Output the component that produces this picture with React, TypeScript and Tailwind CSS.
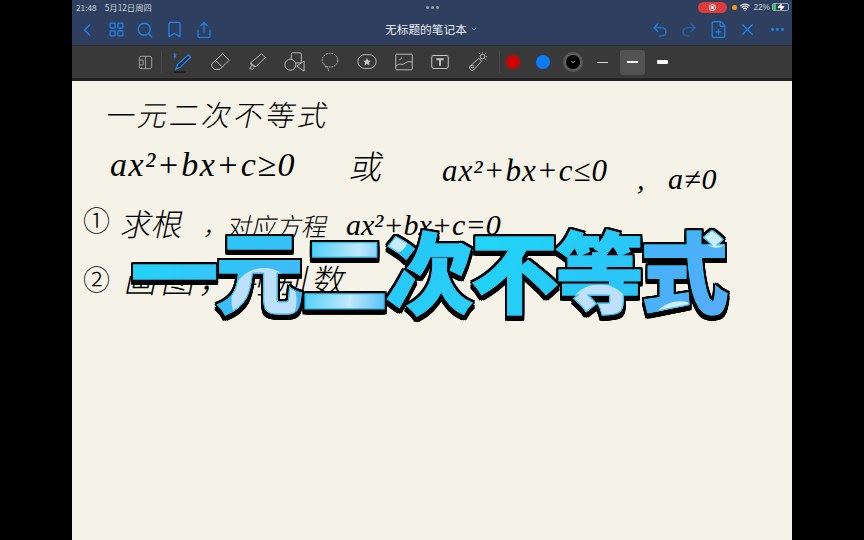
import { ChevronLeft, LayoutGrid, Search, Bookmark, Share, Undo2, Redo2, FilePlus, X, Ellipsis, ChevronDown, Wifi, Zap } from 'lucide-react';

const cjk = "font-['Noto_Sans_CJK_SC',sans-serif]";
const hand = "absolute whitespace-nowrap text-black font-light font-['Noto_Sans_CJK_SC',sans-serif] -skew-x-12";
const math = "absolute whitespace-nowrap text-black italic font-['Liberation_Serif',serif]";
const circled = "absolute whitespace-nowrap text-black font-light font-['Noto_Sans_CJK_SC',sans-serif]";

const toolIcon = 'w-[22px] h-[22px] text-[#c4c4c4]';

function Tool({ children }: { children: React.ReactNode }) {
  return <div className="w-[36.7px] flex justify-center">{children}</div>;
}

function NavSlot({ children }: { children: React.ReactNode }) {
  return <div className="w-[29.4px] flex justify-center">{children}</div>;
}

function BigChar({ ch, bg }: { ch: string; bg: string }) {
  return <span className={`inline-block w-[91px] -mx-[3px] text-center bg-clip-text text-transparent [-webkit-text-stroke:1px_#2ac4f6] ${bg}`}>{ch}</span>;
}

export default function App() {
  return (
    <div className="w-[864px] h-[540px] bg-black flex justify-center overflow-hidden">
      <div className={`w-[720px] h-full flex flex-col ${cjk}`}>
        {/* status bar */}
        <div className="h-[14px] bg-[#2e3f5f] flex items-center justify-between pl-[4px] pr-[3px] text-[8.3px] text-[#c9d0dc] relative">
          <div className="flex gap-[8px]">
            <span>21:48</span>
            <span>5月12日周四</span>
          </div>
          <div className="absolute left-[354px] top-[6px] flex gap-[2px]">
            <div className="w-[3px] h-[3px] rounded-full bg-[#9aa5b8]" />
            <div className="w-[3px] h-[3px] rounded-full bg-[#9aa5b8]" />
            <div className="w-[3px] h-[3px] rounded-full bg-[#9aa5b8]" />
          </div>
          <div className="flex items-center">
            <div className="w-[29px] h-[11px] rounded-full bg-[#de3b3b] flex items-center justify-center">
              <div className="w-[7px] h-[7px] rounded-full border border-white flex items-center justify-center">
                <div className="w-[3px] h-[3px] rounded-full bg-white" />
              </div>
            </div>
            <div className="w-[5px] h-[5px] rounded-full bg-[#f59e0b] ml-[5px]" />
            <Wifi className="w-[10px] h-[10px] text-white ml-[3px]" strokeWidth={3} />
            <span className="ml-[3px] font-['Liberation_Sans',sans-serif]">22%</span>
            <div className="ml-[2px] w-[17px] h-[8px] rounded-[2px] border border-[#9aa5b8] relative overflow-hidden">
              <div className="w-[3px] h-full bg-[#34c759]" />
              <Zap className="absolute left-[4px] top-[-1px] w-[8px] h-[8px] text-white fill-white" />
            </div>
          </div>
        </div>

        {/* nav bar */}
        <div className="h-[31px] bg-[#2e3f5f] flex items-center justify-between text-[#1f85f0] relative">
          <div className="flex items-center">
            <NavSlot><ChevronLeft className="w-[20px] h-[20px]" strokeWidth={1.7} /></NavSlot>
            <NavSlot><LayoutGrid className="w-[17px] h-[17px]" strokeWidth={1.7} /></NavSlot>
            <NavSlot><Search className="w-[18px] h-[18px]" strokeWidth={1.7} /></NavSlot>
            <NavSlot><Bookmark className="w-[19px] h-[19px]" strokeWidth={1.6} /></NavSlot>
            <NavSlot><Share className="w-[18px] h-[18px]" strokeWidth={1.6} /></NavSlot>
          </div>
          <div className="absolute left-[313px] top-[7px] flex items-center text-[11.7px] leading-[16px] text-[#e8ebf0]">
            无标题的笔记本
            <ChevronDown className="w-[8px] h-[8px] ml-[3px] text-[#c9d0dc]" />
          </div>
          <div className="flex items-center">
            <NavSlot><Undo2 className="w-[18px] h-[18px]" strokeWidth={1.6} /></NavSlot>
            <NavSlot><Redo2 className="w-[18px] h-[18px] text-[#2468b8]" strokeWidth={1.6} /></NavSlot>
            <NavSlot><FilePlus className="w-[19px] h-[19px]" strokeWidth={1.5} /></NavSlot>
            <NavSlot><X className="w-[19px] h-[19px]" strokeWidth={1.5} /></NavSlot>
            <NavSlot><Ellipsis className="w-[17px] h-[17px]" strokeWidth={2.2} /></NavSlot>
          </div>
        </div>

        {/* toolbar */}
        <div className="h-[36px] bg-[#393939] border-t border-[#303030] border-b-[3px] border-b-[#232323] flex items-center pl-[57px]">
          <div className="w-[32px] flex justify-center">
            <svg viewBox="0 0 22 22" fill="none" stroke="currentColor" strokeWidth="1" className="w-[17px] h-[17px] text-[#b5b5b5]">
              <rect x="3" y="3" width="16" height="16" rx="2" />
              <path d="M11 3v16M3 8h5v6H3M6 19v-2" />
            </svg>
          </div>
          <div className="w-px h-[22px] bg-[#4a4a4a]" />
          <div className="w-[40px] flex justify-center relative">
            <svg viewBox="0 0 24 24" fill="none" className="w-[23px] h-[23px]">
              <path d="M5 19 7 14 18 4l2.5 2.5L9.5 17z" fill="#0f2b4d" stroke="#2b8cf0" strokeWidth="1.2" />
              <path d="M3 22h12" stroke="#111" strokeWidth="1.2" />
              <path d="M4 2v6M2.5 3.5l3 3M2.5 6.5l3-3" stroke="#2b8cf0" strokeWidth="1" />
            </svg>
          </div>
          <Tool>
            <svg viewBox="0 0 24 24" fill="none" stroke="currentColor" strokeWidth="1" className={toolIcon}>
              <path d="M15 3 22 10 12 20H6l-3-3v-3z" />
              <path d="M7 10l7 7" />
            </svg>
          </Tool>
          <Tool>
            <svg viewBox="0 0 24 24" fill="none" stroke="currentColor" strokeWidth="1" className={toolIcon}>
              <path d="M17 3l4 4-10 10-5-1-1-3z" />
              <path d="M5 13l5 4M6 16l-2 3 3 1 2-2" />
            </svg>
          </Tool>
          <Tool>
            <svg viewBox="0 0 24 24" fill="none" stroke="currentColor" strokeWidth="1" className={toolIcon}>
              <rect x="9" y="2" width="11" height="11" rx="1.5" />
              <circle cx="8" cy="15" r="6" className="fill-[#393939]" />
              <path d="M23 11v11l-8-5.5z" className="fill-[#393939]" />
            </svg>
          </Tool>
          <Tool>
            <svg viewBox="0 0 24 24" fill="none" stroke="currentColor" strokeWidth="1" strokeDasharray="2 1" className={toolIcon}>
              <ellipse cx="12" cy="10" rx="8.5" ry="7.5" />
              <path d="M7 16c0 3 2 2 3 3s0 3 1 3" />
            </svg>
          </Tool>
          <Tool>
            <svg viewBox="0 0 24 24" fill="none" stroke="currentColor" strokeWidth="1" className={toolIcon}>
              <rect x="2" y="4" width="20" height="15" rx="7.5" />
              <path d="m12 7.5 1.3 2.8 3 .3-2.2 2 .6 3-2.7-1.5-2.7 1.5.6-3-2.2-2 3-.3z" fill="currentColor" stroke="none" />
            </svg>
          </Tool>
          <Tool>
            <svg viewBox="0 0 24 24" fill="none" stroke="currentColor" strokeWidth="1" className={toolIcon}>
              <rect x="3" y="3.5" width="18" height="17" rx="1" />
              <path d="M3 17c4-5 6-1 9-3s4-3 9-2M7 10c2-3 3-1 2-3" />
            </svg>
          </Tool>
          <Tool>
            <svg viewBox="0 0 24 24" fill="none" stroke="currentColor" strokeWidth="1.1" className={toolIcon}>
              <rect x="3" y="5" width="18" height="14" rx="2" />
              <path d="M8 9h8M12 9v7" strokeWidth="2" />
            </svg>
          </Tool>
          <Tool>
            <svg viewBox="0 0 24 24" fill="none" stroke="currentColor" strokeWidth="1" className={toolIcon}>
              <path d="M14 8l3 3-9 10c-2 1-5-2-4-4z" />
              <circle cx="7" cy="17" r="1.5" />
              <circle cx="18" cy="6" r="2.5" />
              <path d="M18 1v1M23 6h-1M22 2l-1 1M14 2l1 1M22 10l-1-1" />
            </svg>
          </Tool>
          <div className="w-px h-[22px] bg-[#4a4a4a] ml-[3px] -mr-[2px]" />
          <div className="w-[30px] flex justify-center">
            <div className="w-[14px] h-[14px] rounded-full bg-[#d00000]" />
          </div>
          <div className="w-[30px] flex justify-center">
            <div className="w-[14px] h-[14px] rounded-full bg-[#0a7cff]" />
          </div>
          <div className="w-[30px] flex justify-center">
            <div className="w-[20px] h-[20px] rounded-full bg-black border-[3px] border-[#5a5a5a] flex items-center justify-center">
              <ChevronDown className="w-[6px] h-[6px] text-white" strokeWidth={3} />
            </div>
          </div>
          <div className="w-[30px] flex justify-center">
            <div className="w-[11px] h-px bg-[#d8d8d8]" />
          </div>
          <div className="w-[30px] flex justify-center">
            <div className="w-[25px] h-[25px] rounded-[3px] bg-[#525252] flex items-center justify-center">
              <div className="w-[11px] h-[2px] bg-white" />
            </div>
          </div>
          <div className="w-[30px] flex justify-center">
            <div className="w-[11px] h-[4px] rounded-[1px] bg-white" />
          </div>
        </div>

        {/* page */}
        <div className="flex-1 bg-[#f5f3e7] relative overflow-hidden">
          <span className={`${hand} left-[35px] top-[12px] text-[29px] leading-[40px] tracking-[3px]`}>一元二次不等式</span>
          <span className={`${math} left-[38px] top-[64px] text-[34px] leading-[40px] tracking-[1.5px]`}>ax²+bx+c≥0</span>
          <span className={`${hand} left-[279px] top-[62px] text-[33px] leading-[44px]`}>或</span>
          <span className={`${math} left-[370px] top-[70px] text-[31px] leading-[40px] tracking-[1px]`}>ax²+bx+c≤0</span>
          <span className={`${math} left-[565px] top-[78px] text-[30px] leading-[40px]`}>,</span>
          <span className={`${math} left-[596px] top-[78px] text-[30px] leading-[40px] tracking-[1px]`}>a≠0</span>

          <span className={`${circled} left-[11px] top-[119px] text-[27px] leading-[40px]`}>①</span>
          <span className={`${hand} left-[50px] top-[120px] text-[31px] leading-[44px]`}>求根</span>
          <span className={`${hand} left-[133px] top-[126px] text-[24px] leading-[36px]`}>，</span>
          <span className={`${hand} left-[156px] top-[126px] text-[25px] leading-[36px]`}>对应方程</span>
          <span className={`${math} left-[274px] top-[124px] text-[30px] leading-[40px]`}>ax²+bx+c=0</span>

          <span className={`${circled} left-[11px] top-[178px] text-[27px] leading-[40px]`}>②</span>
          <span className={`${hand} left-[54px] top-[176px] text-[33px] leading-[44px] tracking-[4.5px]`}>画图，判别数</span>

          {/* video title over the page */}
          <div className="absolute left-[60px] top-[129px] flex text-[88px] leading-[116px] font-black [filter:drop-shadow(2px_0_0_#000)_drop-shadow(-2px_0_0_#000)_drop-shadow(0_-2px_0_#000)_drop-shadow(0_5px_0_#000)]">
            <BigChar ch="一" bg="bg-[linear-gradient(90deg,#22d3f5,#38c5f8)]" />
            <BigChar ch="元" bg="bg-[radial-gradient(circle_at_55%_78%,#bfe0fb_0,#bfe0fb_32px,transparent_33px),linear-gradient(135deg,#22cdf5,#4fb0f8)]" />
            <BigChar ch="二" bg="bg-[linear-gradient(100deg,#22c8f5,#bfe8fb_60%,#3fb8f8)]" />
            <BigChar ch="次" bg="bg-[radial-gradient(circle_at_10%_25%,#c8ecfb_0,#c8ecfb_14px,transparent_15px),linear-gradient(135deg,#22c6f5,#2dd0f8)]" />
            <BigChar ch="不" bg="bg-[linear-gradient(135deg,#1fd8f5,#28c8f8)]" />
            <BigChar ch="等" bg="bg-[radial-gradient(circle_at_50%_92%,#bfe0fb_0,#bfe0fb_32px,transparent_33px),linear-gradient(135deg,#22d0f8,#2fc0f8)]" />
            <BigChar ch="式" bg="bg-[radial-gradient(circle_at_85%_20%,#cfeefb_0,#cfeefb_14px,transparent_15px),radial-gradient(circle_at_45%_105%,#cfeefb_0,#cfeefb_30px,transparent_31px),linear-gradient(135deg,#3fb5f8,#5aaaf8)]" />
          </div>
        </div>
      </div>
    </div>
  );
}
